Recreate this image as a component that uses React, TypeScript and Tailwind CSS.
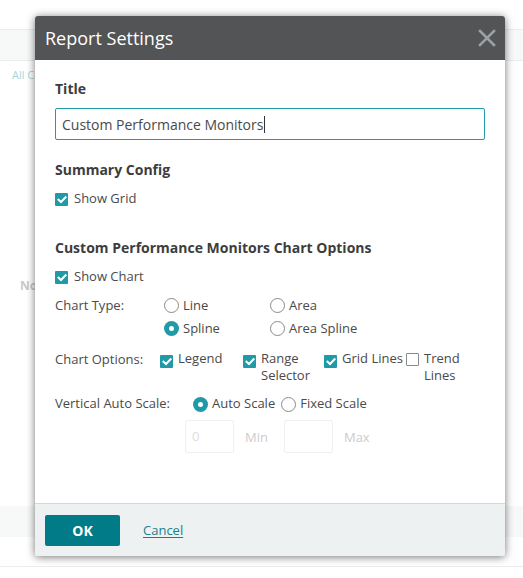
import React from "react";

const font = { fontFamily: '"Open Sans", "Noto Sans", Arial, sans-serif' };

function Check({ checked }: { checked: boolean }) {
  return checked ? (
    <span className="inline-flex items-center justify-center w-[13px] h-[13px] bg-[#1f9aa6] rounded-[1px] shrink-0">
      <svg width="10" height="9" viewBox="0 0 10 9">
        <path d="M1.5 4.6 L4 7 L8.6 2.2" fill="none" stroke="white" strokeWidth="2" strokeLinecap="square" />
      </svg>
    </span>
  ) : (
    <span className="inline-block w-[13px] h-[13px] border border-[#8a8a8a] bg-white rounded-[1px] shrink-0" />
  );
}

function Radio({ checked }: { checked: boolean }) {
  return checked ? (
    <span className="inline-flex items-center justify-center w-[15px] h-[15px] rounded-full bg-[#1f9aa6] shrink-0">
      <span className="w-[5px] h-[5px] rounded-full bg-white" />
    </span>
  ) : (
    <span className="inline-block w-[15px] h-[15px] rounded-full border border-[#8a8a8a] bg-white shrink-0" />
  );
}

export default function App() {
  return (
    <div className="relative w-[523px] h-[578px] bg-white overflow-hidden text-[#4a4a4a]" style={font}>
      {/* background page */}
      <div className="h-[29px]" />
      <div className="h-[32px] bg-[#f7f8f8] border-y border-[#ececec]" />
      <div className="pl-[12px] pt-[7px] text-[11px] text-[#a6d6db] leading-[14px]">All Counters</div>
      <div className="pl-[20px] pt-[196px] text-[12px] font-bold text-[#c9c9c9] leading-[16px]">No data</div>
      <div className="mt-[212px] h-[31px] bg-[#f7f8f8]" />
      <div className="flex h-[30px] items-center text-[12px] font-bold text-[#c8c8c8] border-b border-[#ececec]">
        <span className="ml-[204px]">Min</span>
        <span className="ml-[203px]">Max</span>
      </div>

      {/* modal */}
      <div className="absolute left-[35px] top-[16px] w-[470px] h-[540px] bg-white rounded-[3px] shadow-[0_1px_9px_rgba(0,0,0,0.55)] flex flex-col overflow-hidden">
        <div className="h-[44px] bg-[#535456] flex items-center justify-between pl-[10px] pr-[9px] shrink-0">
          <span className="text-white text-[18px] leading-[24px]">Report Settings</span>
          <svg width="18" height="18" viewBox="0 0 18 18">
            <path d="M2 2 L16 16 M16 2 L2 16" stroke="#9aa0a6" strokeWidth="2.6" strokeLinecap="square" />
          </svg>
        </div>

        <div className="flex-1 px-[20px] pt-[19px] text-[13px]">
          <div className="text-[14px] font-bold leading-[20px] text-[#3d3d3d]">Title</div>
          <div className="mt-[9px] h-[32px] border border-[#1f9aa6] rounded-[2px] flex items-center pl-[6px] text-[14px] text-[#4a4a4a]">
            Custom Performance Monitors<span className="inline-block w-px h-[17px] bg-[#333] ml-[1px]" />
          </div>

          <div className="mt-[20px] text-[14px] font-bold leading-[20px] text-[#3d3d3d]">Summary Config</div>
          <div className="mt-[10px] flex items-center gap-[6px] h-[18px]">
            <Check checked />
            <span>Show Grid</span>
          </div>

          <div className="mt-[30px] text-[14px] font-bold leading-[20px] text-[#3d3d3d]">Custom Performance Monitors Chart Options</div>
          <div className="mt-[10px] flex items-center gap-[6px] h-[18px]">
            <Check checked />
            <span>Show Chart</span>
          </div>

          <div className="mt-[10px] flex leading-[18px]">
            <div className="w-[109px] shrink-0">Chart Type:</div>
            <div className="grid grid-cols-[106px_120px] gap-y-[5px]">
              <div className="flex items-center gap-[4px] h-[18px]"><Radio checked={false} /><span>Line</span></div>
              <div className="flex items-center gap-[4px] h-[18px]"><Radio checked={false} /><span>Area</span></div>
              <div className="flex items-center gap-[4px] h-[18px]"><Radio checked /><span>Spline</span></div>
              <div className="flex items-center gap-[4px] h-[18px]"><Radio checked={false} /><span>Area Spline</span></div>
            </div>
          </div>

          <div className="mt-[13px] flex leading-[17px]">
            <div className="w-[105px] shrink-0 leading-[18px]">Chart Options:</div>
            <div className="flex">
              <div className="w-[83px] flex items-start gap-[5px]"><span className="mt-[3px]"><Check checked /></span><span>Legend</span></div>
              <div className="w-[81px] flex items-start gap-[5px]"><span className="mt-[3px]"><Check checked /></span><span>Range<br />Selector</span></div>
              <div className="w-[82px] flex items-start gap-[5px]"><span className="mt-[3px]"><Check checked /></span><span>Grid Lines</span></div>
              <div className="flex items-start gap-[5px]"><span className="mt-[3px]"><Check checked={false} /></span><span>Trend<br />Lines</span></div>
            </div>
          </div>

          <div className="mt-[11px] flex items-center h-[18px]">
            <div className="w-[138px] shrink-0">Vertical Auto Scale:</div>
            <div className="flex items-center gap-[4px]"><Radio checked /><span>Auto Scale</span></div>
            <div className="ml-[6px] flex items-center gap-[4px]"><Radio checked={false} /><span>Fixed Scale</span></div>
          </div>

          <div className="mt-[7px] flex items-center ml-[130px] h-[33px]">
            <div className="w-[49px] h-[33px] border border-[#f0f0f0] rounded-[2px] flex items-center pl-[6px] text-[13px] text-[#dddddd]">0</div>
            <span className="ml-[11px] mt-[3px] text-[#cccccc]">Min</span>
            <div className="ml-[16px] w-[49px] h-[33px] border border-[#f0f0f0] rounded-[2px]" />
            <span className="ml-[11px] mt-[3px] text-[#cccccc]">Max</span>
          </div>
        </div>

        <div className="h-[53px] shrink-0 bg-[#eef1f2] border-t border-[#d3d7d9] flex items-center pl-[10px]">
          <button className="w-[75px] h-[31px] bg-[#007b87] rounded-[2px] text-white font-bold text-[14px]">OK</button>
          <span className="ml-[23px] mt-[2px] text-[13px] text-[#1a7f8c] underline underline-offset-2">Cancel</span>
        </div>
      </div>
    </div>
  );
}
